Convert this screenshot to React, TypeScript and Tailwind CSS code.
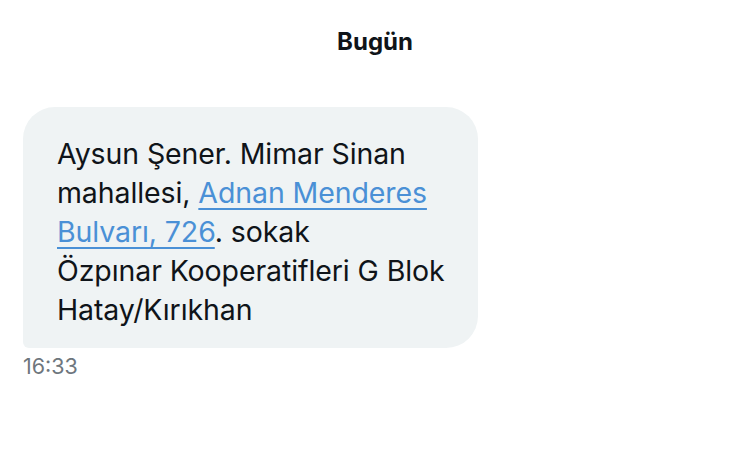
export default function App() {
    return (
        <div className="w-[750px] h-[455px] bg-white font-['Inter','Liberation_Sans',sans-serif] text-[#0f1419]">
            {/* date header */}
            <div className="pt-[26px] text-center text-[24px] font-bold leading-[32px]">Bugün</div>

            {/* message */}
            <div className="pl-[23px] pt-[49px]">
                <div className="w-[455px] h-[241px] bg-[#eff3f4] rounded-[32px] rounded-bl-[6px] pl-[34px] pt-[27px] text-[28.5px] leading-[39px] tracking-[-0.1px]">
                    Aysun Şener. Mimar Sinan
                    <br />
                    mahallesi,{' '}
                    <span className="text-[#4a90d6] underline underline-offset-[5px] decoration-[2px]">
                        Adnan Menderes
                        <br />
                        Bulvarı, 726
                    </span>
                    . sokak
                    <br />
                    Özpınar Kooperatifleri G Blok
                    <br />
                    Hatay/Kırıkhan
                </div>
                <div className="pt-[5px] text-[21.5px] leading-[26px] text-[#6e767d]">16:33</div>
            </div>
        </div>
    );
}
